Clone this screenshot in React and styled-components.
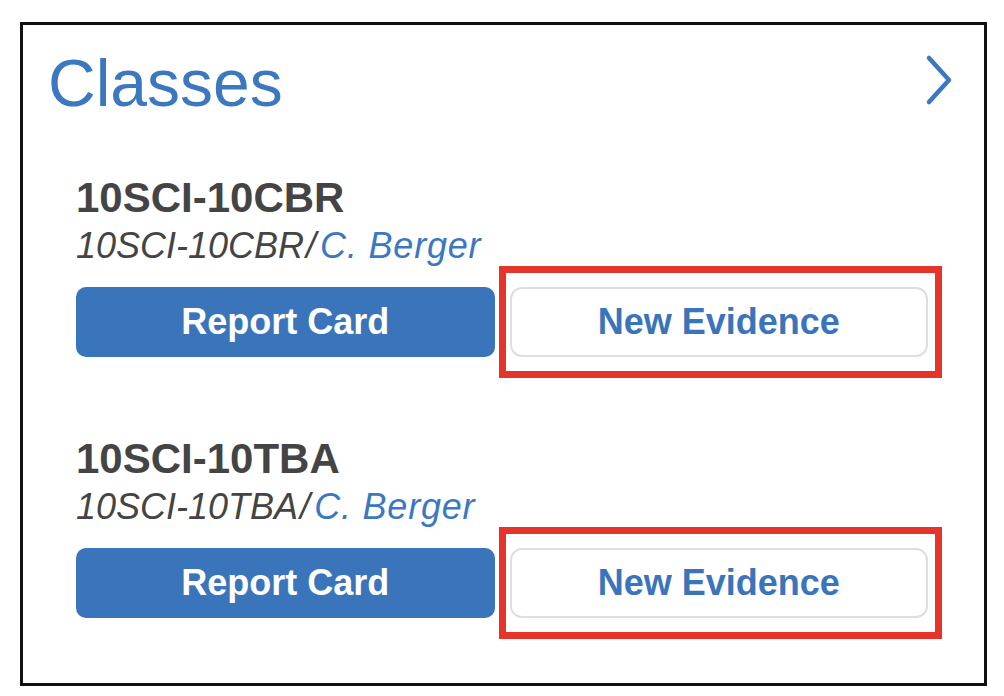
import React from "react";
import styled, { createGlobalStyle } from "styled-components";

const GlobalStyle = createGlobalStyle`
  html, body {
    margin: 0;
    padding: 0;
    background: #fff;
  }
  body {
    font-family: "Liberation Sans", Arial, sans-serif;
  }
`;

const Page = styled.div`
  padding: 22px 0 0 20px;
`;

const Card = styled.div`
  box-sizing: border-box;
  width: 967px;
  height: 664px;
  border: 3px solid #111;
  background: #fff;
  padding: 25px 30px 0 25px;
`;

const Header = styled.div`
  display: flex;
  align-items: center;
  justify-content: space-between;
`;

const Title = styled.h1`
  margin: 0;
  font-size: 66px;
  line-height: 66px;
  font-weight: 400;
  color: #3b78c0;
`;

const ChevronButton = styled.button`
  display: flex;
  align-items: center;
  justify-content: center;
  border: none;
  background: none;
  padding: 0;
  margin-top: -6px;
  cursor: pointer;
`;

const List = styled.div`
  display: flex;
  flex-direction: column;
  gap: 77px;
  padding: 57px 26px 0 28px;
`;

const ClassItem = styled.div`
  display: flex;
  flex-direction: column;
`;

const ClassName = styled.div`
  font-size: 42px;
  line-height: 50px;
  font-weight: 700;
  color: #444;
`;

const ClassMeta = styled.div`
  font-size: 36px;
  line-height: 46px;
  font-style: italic;
  color: #444;
`;

const Slash = styled.span`
  margin: 0 4px 0 2px;
`;

const Teacher = styled.span`
  color: #3b78c0;
  letter-spacing: 0.8px;
`;

const Actions = styled.div`
  display: grid;
  grid-template-columns: 1fr 1fr;
  gap: 15px;
  margin-top: 18px;
`;

const Button = styled.button`
  width: 100%;
  min-width: 0;
  box-sizing: border-box;
  height: 70px;
  border-radius: ${(p) => (p.$primary ? "10px" : "12px")};
  border: 2px solid ${(p) => (p.$primary ? "#3a74ba" : "#dedede")};
  background: ${(p) => (p.$primary ? "#3a74ba" : "#fff")};
  color: ${(p) => (p.$primary ? "#fff" : "#3a74ba")};
  font-family: "Liberation Sans", Arial, sans-serif;
  font-size: 36px;
  font-weight: 700;
  cursor: pointer;
`;

const Highlight = styled.div`
  display: flex;
  min-width: 0;
  position: relative;

  &::after {
    content: "";
    position: absolute;
    top: -21px;
    bottom: -21px;
    left: -11px;
    right: -14px;
    border: 7px solid #e5342a;
    pointer-events: none;
  }
`;

const classes = [
  { code: "10SCI-10CBR", teacher: "C. Berger" },
  { code: "10SCI-10TBA", teacher: "C. Berger" },
];

function Chevron() {
  return (
    <svg width="30" height="54" viewBox="0 0 30 54">
      <polyline
        points="5,5 25,27 5,49"
        fill="none"
        stroke="#3b78c0"
        strokeWidth="4.5"
        strokeLinecap="round"
        strokeLinejoin="round"
      />
    </svg>
  );
}

export default function App() {
  return (
    <Page>
      <GlobalStyle />
      <Card>
        <Header>
          <Title>Classes</Title>
          <ChevronButton aria-label="More">
            <Chevron />
          </ChevronButton>
        </Header>
        <List>
          {classes.map((c) => (
            <ClassItem key={c.code}>
              <ClassName>{c.code}</ClassName>
              <ClassMeta>
                {c.code}
                <Slash>/</Slash>
                <Teacher>{c.teacher}</Teacher>
              </ClassMeta>
              <Actions>
                <Button $primary>Report Card</Button>
                <Highlight>
                  <Button>New Evidence</Button>
                </Highlight>
              </Actions>
            </ClassItem>
          ))}
        </List>
      </Card>
    </Page>
  );
}
